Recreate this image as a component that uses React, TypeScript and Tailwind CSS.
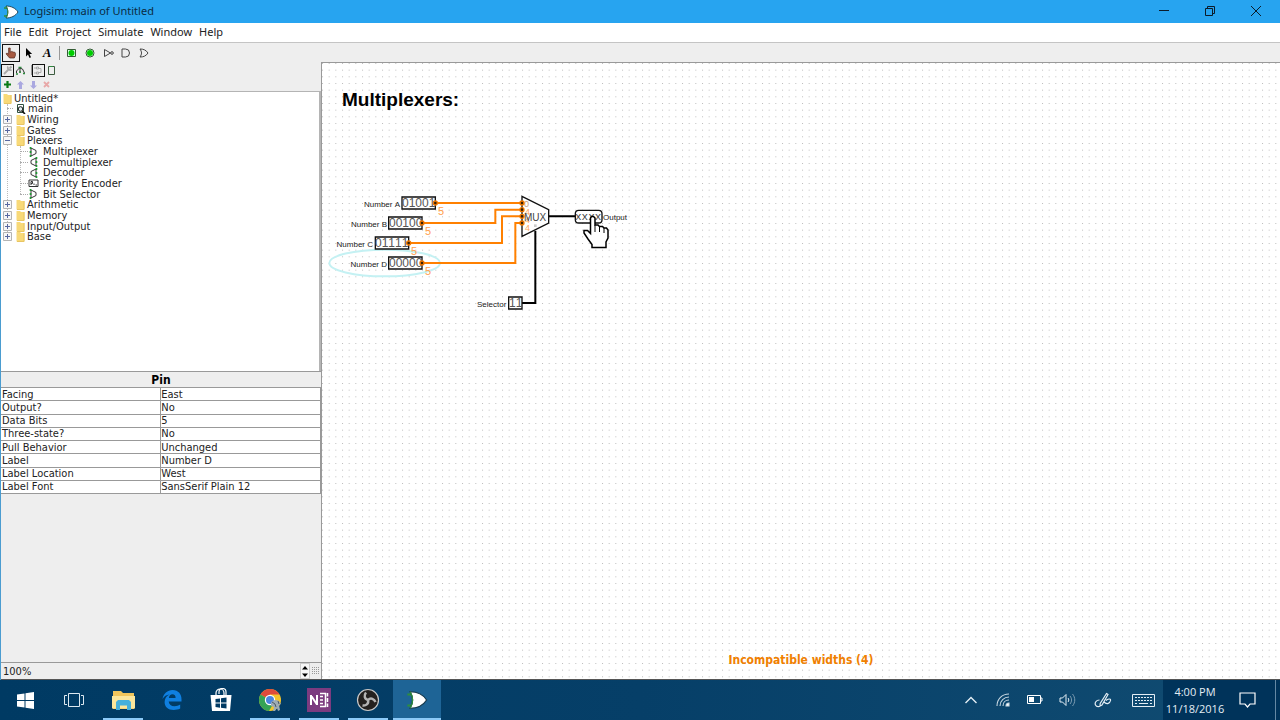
import type { ReactNode } from 'react';
import clsx from 'clsx';

const menus = ['File', 'Edit', 'Project', 'Simulate', 'Window', 'Help'];

type Glyph = 'circuit' | 'folder' | 'mux' | 'demux' | 'encoder';

const tree: { label: string; depth: number; icon: Glyph; open?: boolean }[] = [
    { label: 'Untitled*', depth: 0, icon: 'folder' },
    { label: 'main', depth: 1, icon: 'circuit' },
    { label: 'Wiring', depth: 1, icon: 'folder', open: false },
    { label: 'Gates', depth: 1, icon: 'folder', open: false },
    { label: 'Plexers', depth: 1, icon: 'folder', open: true },
    { label: 'Multiplexer', depth: 2, icon: 'mux' },
    { label: 'Demultiplexer', depth: 2, icon: 'demux' },
    { label: 'Decoder', depth: 2, icon: 'demux' },
    { label: 'Priority Encoder', depth: 2, icon: 'encoder' },
    { label: 'Bit Selector', depth: 2, icon: 'mux' },
    { label: 'Arithmetic', depth: 1, icon: 'folder', open: false },
    { label: 'Memory', depth: 1, icon: 'folder', open: false },
    { label: 'Input/Output', depth: 1, icon: 'folder', open: false },
    { label: 'Base', depth: 1, icon: 'folder', open: false },
];

const attributes = [
    ['Facing', 'East'],
    ['Output?', 'No'],
    ['Data Bits', '5'],
    ['Three-state?', 'No'],
    ['Pull Behavior', 'Unchanged'],
    ['Label', 'Number D'],
    ['Label Location', 'West'],
    ['Label Font', 'SansSerif Plain 12'],
];

const LogisimMark = ({ className }: { className?: string }) => (
    <svg viewBox="0 0 16 16" className={className} fill="none">
        <path d="M1 4h3M1 12h3" stroke="#2f8f3a" strokeWidth="1.4" />
        <path d="M3 2C8 2 12.500 4 15 8C12.500 12 8 14 3 14C5.400 10 5.400 6 3 2Z" fill="#fff" stroke="#16384a" strokeWidth="0.9" />
        <path d="M3 2C5.4 6 5.4 10 3 14" stroke="#2f8f3a" strokeWidth="0.9" />
    </svg>
);

const TitleBar = () => (
    <header className="flex h-[23px] shrink-0 items-center bg-[#27a4f0] pr-px pl-[3px]">
        <LogisimMark className="h-4 w-4" />
        <h1 className="ml-[5px] flex-1 font-['Noto_Sans','Open_Sans',sans-serif] text-[11px] text-[#0c2c44]">Logisim: main of Untitled</h1>
        <button aria-label="Minimize" className="flex h-full w-[46px] items-center justify-center">
            <svg width="12" height="12" stroke="#0b1c2b"><path d="M1 4.500h10" /></svg>
        </button>
        <button aria-label="Restore" className="flex h-full w-[46px] items-center justify-center">
            <svg width="12" height="12" fill="none" stroke="#0b1c2b"><path d="M1.500 2.500h7v7h-7zM3.500 2.500v-2h7v7h-2" /></svg>
        </button>
        <button aria-label="Close" className="flex h-full w-[46px] items-center justify-center">
            <svg width="12" height="12" stroke="#0b1c2b"><path d="M1 0l10 10M11 0L1 10" /></svg>
        </button>
    </header>
);

const MenuBar = () => (
    <nav className="flex h-5 shrink-0 items-center gap-[7px] border-b border-[#c4c4c4] bg-white pl-[3px] font-['Noto_Sans','Open_Sans',sans-serif] text-[11px] text-[#222]">
        {menus.map((menu) => (
            <button key={menu}>{menu}</button>
        ))}
    </nav>
);

const Tool = ({ label, active, small, children }: { label: string; active?: boolean; small?: boolean; children: ReactNode }) => (
    <button
        aria-label={label}
        className={clsx(
            'flex shrink-0 items-center justify-center',
            small ? 'h-[13px] w-[13px]' : 'h-[18px] w-[18px]',
            active && 'border border-[#111]',
        )}
    >
        {children}
    </button>
);

const ToolBar = () => (
    <div className="flex h-[19px] shrink-0 items-center bg-[#eee] pl-px">
        <Tool label="Poke" active>
            <svg width="12" height="12" viewBox="0 0 12 12">
                <path d="M3.6 1h1.6v4.2l1-.8.9.5.8-.3.8.7 1.1-.1.6 1v2.4L9.3 11H4.6L1 6.8 2 6l1.6 1.2Z" fill="#a65a42" stroke="#54281c" strokeWidth="0.7" />
            </svg>
        </Tool>
        <Tool label="Edit">
            <svg width="10" height="12" viewBox="0 0 10 12"><path d="M2 1v8.4l2-1.8 1.5 3.4 1.5-.7L5.500 7h2.6Z" fill="#000" /></svg>
        </Tool>
        <Tool label="Text">
            <span className="font-['Liberation_Serif',serif] text-[13px] leading-none font-bold text-black italic">A</span>
        </Tool>
        <span className="mx-[3px] h-[14px] w-px bg-[#999]" />
        <Tool label="Input pin">
            <svg width="10" height="10"><path d="M.5 1.500h8v7h-8z" fill="#dfe" stroke="#345c34" /><circle cx="4.500" cy="5" r="3" fill="#0c0" /></svg>
        </Tool>
        <Tool label="Output pin">
            <svg width="10" height="10"><circle cx="5" cy="5" r="4" fill="#dfe" stroke="#345c34" /><circle cx="5" cy="5" r="3" fill="#0c0" /></svg>
        </Tool>
        <Tool label="NOT gate">
            <svg width="11" height="10" fill="none" stroke="#444"><path d="M1.500 1.500v7l6-3.500Z" /><circle cx="9" cy="5" r="1.300" /></svg>
        </Tool>
        <Tool label="AND gate">
            <svg width="10" height="10" fill="none" stroke="#444"><path d="M1 1h3.500a4 4 0 010 8H1Z" /></svg>
        </Tool>
        <Tool label="OR gate">
            <svg width="10" height="10" fill="none" stroke="#444"><path d="M1 1c3.500 0 6 1 8 4-2 3-4.500 4-8 4 2-3 2-5 0-8Z" /></svg>
        </Tool>
    </div>
);

const ExplorerBars = () => (
    <>
        <div className="flex h-4 items-center">
            <Tool label="Show projects" small active>
                <svg width="10" height="10" fill="none" stroke="#aaa" strokeWidth="1.800"><path d="M1 9l4-4M8.500 1.500l-2 2M5 1.500c-1 2 .500 4 3.500 3.500" /></svg>
            </Tool>
            <Tool label="Show simulation" small>
                <svg width="11" height="11" fill="none"><path d="M1.500 8V6l3-3 3 1 2 4M5 3v5" stroke="#333" /><path d="M1 9h2M4 7h2M8 8.500h2M3.500 2.500h3" stroke="#2c8a3c" strokeWidth="1.600" /></svg>
            </Tool>
            <span className="ml-1 h-[10px] w-px bg-[#999]" />
            <Tool label="Edit layout" small active>
                <svg width="9" height="9" fill="none" stroke="#aaa"><path d="M0 2h2M0 7h2M2.500 1h2v2h-2ZM2.500 6h2v2h-2ZM5 2.500h2v4H5" /></svg>
            </Tool>
            <Tool label="Edit appearance" small>
                <svg width="9" height="11" fill="none"><path d="M1.500 1.500h6v8h-6Z" stroke="#3c5c40" /><path d="M3 1.500h3" stroke="#2c8a3c" /></svg>
            </Tool>
        </div>
        <div className="flex h-[13px] items-center">
            <Tool label="Add circuit" small>
                <svg width="9" height="9" stroke="#0a7a14" strokeWidth="2.200"><path d="M4.500 1v7M1 4.500h7" /></svg>
            </Tool>
            <Tool label="Move up" small>
                <svg width="7" height="8" fill="#aaa8e0"><path d="M3.500 0L7 3.500H5V8H2V3.500H0Z" /></svg>
            </Tool>
            <Tool label="Move down" small>
                <svg width="7" height="8" fill="#aaa8e0"><path d="M3.500 8L0 4.500H2V0H5V4.500H7Z" /></svg>
            </Tool>
            <Tool label="Remove circuit" small>
                <svg width="7" height="7" stroke="#e8a8a8" strokeWidth="1.800"><path d="M1 1l5 5M6 1L1 6" /></svg>
            </Tool>
        </div>
    </>
);

const TreeIcon = ({ icon }: { icon: Glyph }) => {
    if (icon === 'folder') {
        return (
            <svg width="9" height="11" viewBox="0 0 9 11" className="shrink-0">
                <path d="M.5 1h3.500l1 1h3.500v8.500H.5Z" fill="#f8d978" />
                <path d="M1 10.500H8V2" fill="none" stroke="#e8c564" />
            </svg>
        );
    }
    return (
        <svg width="11" height="10" viewBox="0 0 11 10" className="shrink-0" fill="none" stroke="#333">
            {icon === 'circuit' && (
                <>
                    <path d="M2.500.5h6v8h-6Z" stroke="#2f5140" />
                    <circle cx="5.500" cy="5" r="2.300" fill="#dfeef0" stroke="#111" />
                    <path d="M7 7l3 3" stroke="#111" strokeWidth="1.600" />
                </>
            )}
            {icon === 'mux' && (
                <>
                    <path d="M3 1l5 2.500v3L3 9Z" />
                    <path d="M2.500 0v2M2.500 4v2M2.500 8v2" stroke="#1c9c30" strokeWidth="1.600" />
                </>
            )}
            {icon === 'demux' && (
                <>
                    <path d="M8 1L3 3.500v3L8 9Z" />
                    <path d="M8.500 0v2M8.500 4v2M8.500 8v2" stroke="#1c9c30" strokeWidth="1.600" />
                </>
            )}
            {icon === 'encoder' && <path d="M1 2h9v6.500H1ZM3 7V3.500h1.500v2H3M6 7V5.500M7.500 7h1.500" />}
        </svg>
    );
};

const Explorer = () => (
    <div className="min-h-0 flex-1 border-t border-r-2 border-[#b4b4b4] bg-white pt-px">
        <ul className="relative grid h-[149px] auto-rows-fr text-[11px] leading-none text-[#222]">
            <span className="absolute top-[11px] left-[6px] h-[132px] border-l border-dotted border-[#bbb]" />
            <span className="absolute top-[53px] left-[19px] h-[48px] border-l border-dotted border-[#bbb]" />
            {tree.map((node) => (
                <li
                    key={node.label}
                    className={clsx(
                        'relative flex min-h-0 items-center',
                        node.depth < 2 && 'gap-[2px] pl-[2px]',
                        node.depth === 2 && 'gap-1 pl-[19px]',
                    )}
                >
                    {node.depth === 1 && node.open !== undefined && (
                        <button aria-label={`Toggle ${node.label}`} className="mr-[2px] shrink-0">
                            <svg width="9" height="9" className="block" fill="none">
                                <path d="M.5.5h8v8h-8Z" fill="#f7f7f7" stroke="#b4b4b4" />
                                <path d={node.open ? 'M2 4.500h5' : 'M2 4.500h5M4.500 2v5'} stroke="#5868a0" />
                            </svg>
                        </button>
                    )}
                    {node.depth === 1 && node.open === undefined && <span className="ml-1 w-[6px] border-t border-dotted border-[#aaa]" />}
                    {node.depth === 2 && <span className="-mr-1 w-[8px] border-t border-dotted border-[#aaa]" />}
                    <TreeIcon icon={node.icon} />
                    <span>{node.label}</span>
                </li>
            ))}
        </ul>
    </div>
);

const AttributeTable = () => (
    <section className="flex h-[291px] shrink-0 flex-col border-t border-[#999] bg-[#eee]">
        <h2 className="h-[15px] text-center text-[12px] leading-4 font-bold text-black">Pin</h2>
        <table className="h-[107px] w-full table-fixed border-collapse bg-white text-[11px] leading-none text-[#222]">
            <tbody>
                {attributes.map(([name, value]) => (
                    <tr key={name}>
                        <th scope="row" className="border border-l-0 border-[#999] p-0 pl-px text-left font-normal">{name}</th>
                        <td className="border border-[#999] p-0">{value}</td>
                    </tr>
                ))}
            </tbody>
        </table>
    </section>
);

const ZoomBar = () => (
    <div className="flex h-[17px] shrink-0 items-center border-t border-[#999] bg-[#eee] text-[11px] text-[#222]">
        <input aria-label="Zoom" defaultValue="100%" className="h-full min-w-0 flex-1 pl-[2px] outline-none" />
        <div className="flex h-full w-[10px] flex-col border border-[#ccc] bg-[#f6f6f6]">
            <button aria-label="Zoom in" className="flex flex-1 items-center justify-center">
                <svg width="6" height="4"><path d="M3 0l3 3.500H0Z" /></svg>
            </button>
            <button aria-label="Zoom out" className="flex flex-1 items-center justify-center">
                <svg width="6" height="4"><path d="M3 4L0 .5h6Z" /></svg>
            </button>
        </div>
        <button aria-label="Toggle grid" className="flex w-[11px] justify-center">
            <svg width="8" height="8" stroke="#999" strokeDasharray="1 1"><path d="M0 .5h8M0 2.500h8M0 4.500h8M0 6.500h8" /></svg>
        </button>
    </div>
);

// Pin values and labels, in screen pixels; the wiring below is in circuit units.
const pins = [
    { name: 'Number A', bits: '01001', x: 80, y: 140 },
    { name: 'Number B', bits: '00100', x: 67, y: 160 },
    { name: 'Number C', bits: '01111', x: 53, y: 180 },
    { name: 'Number D', bits: '00000', x: 67, y: 200 },
];

const Canvas = () => (
    <main className="relative min-w-0 flex-1 overflow-hidden border-t border-l border-[#999] bg-white">
        <svg className="absolute inset-0 h-full w-full font-['Liberation_Sans',Arial,sans-serif] [font-kerning:none]">
            <defs>
                <pattern id="grid" width="10" height="10" patternUnits="userSpaceOnUse" patternTransform="scale(0.66667)">
                    <path d="M0 0h1.500v1.500H0Z" fill="#bcbcbc" />
                </pattern>
            </defs>
            <rect width="100%" height="100%" fill="url(#grid)" />

            <g transform="scale(0.66667)" fill="none">
                <ellipse cx="94" cy="300" rx="83" ry="20" stroke="#c4f1f3" strokeWidth="3" />
                <g stroke="#ff8000" strokeWidth="3">
                    <path d="M170 210H300M150 240H260V220H300M130 270H270V230H300M150 300H290V240H300" />
                </g>
                <g stroke="#000" strokeWidth="3">
                    <path d="M340 230H380M300 360H320V252" />
                </g>
                <g stroke="#111" strokeWidth="2">
                    <path d="M120 201h50v18h-50ZM100 231h50v18h-50ZM80 261h50v18H80ZM100 291h50v18h-50ZM280 351h20v18h-20Z" fill="#fff" />
                    <path d="M300 200L340 220V240L300 260Z" fill="#fff" />
                    <rect x="380" y="221" width="40" height="19" rx="5" fill="#fff" />
                </g>
                <path d="M318 242h4v4h-4Z" fill="#ccc" />
            </g>

            {pins.map((pin) => (
                <g key={pin.name}>
                    <text x={pin.x - 2} y={pin.y + 4} fontSize="8" textAnchor="end" fill="#222">{pin.name}</text>
                    <text x={pin.x} y={pin.y + 4} fontSize="12" fill="#555">{pin.bits}</text>
                    <text x={pin.x + 36} y={pin.y + 12} fontSize="11" fill="#ffa04c">5</text>
                </g>
            ))}
            <text x="155" y="244" fontSize="8" fill="#222">Selector</text>
            <text x="187" y="244" fontSize="12" fill="#555">11</text>
            <g fontSize="9" fill="#ffa860">
                <text x="202" y="144" fill="#c8a080">0</text>
                <text x="203" y="152">4</text>
                <text x="203" y="160">4</text>
                <text x="203" y="168">4</text>
            </g>
            <text x="213" y="158" fontSize="10" textAnchor="middle" fill="#444">MUX</text>
            <text x="253" y="157" fontSize="11" fill="#444" className="font-['Liberation_Mono',monospace]">xxxx</text>
            <text x="281" y="157" fontSize="8" fill="#222">Output</text>

            <g transform="scale(0.66667)" fill="#3c2000" stroke="#f07800" strokeWidth="2">
                <circle cx="170" cy="210" r="3" />
                <circle cx="150" cy="240" r="3" />
                <circle cx="130" cy="270" r="3" />
                <circle cx="150" cy="300" r="3" />
                <circle cx="300" cy="210" r="3" />
                <circle cx="300" cy="220" r="3" />
                <circle cx="300" cy="230" r="3" />
                <circle cx="300" cy="240" r="3" />
            </g>

            <text x="20" y="43" fontSize="19" fontWeight="bold">Multiplexers:</text>

            {/* Poke cursor */}
            <path
                d="M268.500 155l1-1.500h2l1.500 1.500v7h3l1.500 1.500h3l1.500 1.500h2.500l1.500 2v8l-2 4v5.500h-14v-3l-4-5.500-4-6v-2.500h3.500l3 3Z"
                fill="#fff"
                stroke="#000"
                strokeWidth="1.500"
            />
            <path d="M273 162v7M277.500 163v6M282 165v5" stroke="#000" />
        </svg>
        <p className="absolute bottom-[11px] left-1/2 -translate-x-1/2 text-[12px] leading-4 font-bold whitespace-nowrap text-[#f08000]">
            Incompatible widths (4)
        </p>
    </main>
);

const TaskButton = ({ label, running, active, children }: { label: string; running?: boolean; active?: boolean; children: ReactNode }) => (
    <button aria-label={label} className={clsx('relative flex h-full w-12 items-center justify-center', active && 'bg-[#1e6496]')}>
        {children}
        {(running || active) && <span className={clsx('absolute bottom-0 h-[2px] bg-[#8ccaf8]', active ? 'inset-x-0' : 'inset-x-1')} />}
    </button>
);

const TaskBar = () => (
    <footer className="flex h-10 shrink-0 items-center justify-between bg-linear-to-r from-[#003a63] via-[#063f68] to-[#114c72] text-[#e4eef5]">
        <div className="flex h-full gap-px pl-px">
            <TaskButton label="Start">
                <svg width="17" height="17" viewBox="0 0 17 17" fill="#fff"><path d="M0 2.500l7.500-1v6.500H0ZM8.500 1.300L17 0v8H8.500ZM0 9h7.500v6.500L0 14.500ZM8.500 9H17v8l-8.500-1.300Z" /></svg>
            </TaskButton>
            <TaskButton label="Task View">
                <svg width="21" height="15" fill="none" stroke="#dce8f0"><path d="M4.500.5h11v13h-11ZM3 2.500H.5v9H3M17 2.500h2.500v9H17" /></svg>
            </TaskButton>
            <TaskButton label="File Explorer" running>
                <svg width="23" height="20" viewBox="0 0 23 20">
                    <path d="M1 1h8l2 2h11v16H1Z" fill="#f0c55c" />
                    <path d="M0 6h23v12.500H0Z" fill="#fbe69c" />
                    <path d="M4 20V12l2-2h11l2 2v8h-4v-4.500H8V20Z" fill="#45b0dc" />
                </svg>
            </TaskButton>
            <TaskButton label="Edge">
                <svg width="20" height="20" viewBox="0 0 20 20" fill="#0f7fe0">
                    <path d="M.5 9C1.500 3.500 5.500 0 10.500 0 16.500 0 19.500 4.300 19.500 9.500v2H6.700c.3 3 2.500 4.700 5.800 4.700 2.200 0 4-.6 5.700-1.600v4c-1.900 1-4.200 1.400-6.500 1.400C6 20 2.600 16.800 2.600 12c0-3.300 1.800-6 4.900-7.500C4.500 4.800 2 6.300.5 9ZM6.900 8h6.700c0-2.400-1-3.700-3.100-3.700S7.300 5.600 6.900 8Z" />
                </svg>
            </TaskButton>
            <TaskButton label="Store">
                <svg width="22" height="24" viewBox="0 0 22 24">
                    <path d="M6 8V5a4 4 0 018 0v3M9 6V4a3.500 3.500 0 017 0v3" fill="none" stroke="#fff" strokeWidth="1.200" />
                    <path d="M.5 7h21l-1.500 16H2Z" fill="#fff" />
                    <path d="M5.500 11l4.500-.6v4.200H5.500ZM11 10.200l5.500-.7v5.100H11ZM5.500 15.500H10v4.200l-4.500-.6ZM11 15.500h5.500v5L11 19.800Z" fill="#003a63" />
                </svg>
            </TaskButton>
            <TaskButton label="Chrome" running>
                <svg width="24" height="24" viewBox="0 0 24 24">
                    <circle cx="12" cy="12" r="11" fill="#f2c42c" />
                    <path d="M12 12L2.500 6.500A11 11 0 0121.500 6.500H12Z" fill="#dd4b3c" />
                    <path d="M12 12l-9.500-5.500A11 11 0 0011 23l5-8.500Z" fill="#35a355" />
                    <circle cx="12" cy="12" r="5.200" fill="#fff" />
                    <circle cx="12" cy="12" r="4" fill="#4a86e0" />
                    <path d="M13 15c1-3 5-4 8-2l2 3-2 1 1 5-2 1-1-3-2 3h-2l1-4-3-1Z" fill="#9eacb4" />
                    <path d="M14 14l3 2 1 3M20 13l1 3" fill="none" stroke="#4c5a66" />
                </svg>
            </TaskButton>
            <TaskButton label="OneNote" running>
                <svg width="24" height="24" viewBox="0 0 24 24">
                    <path d="M0 0h24v24H0Z" fill="#7c3b80" />
                    <path d="M4 17V7M10 7v10M4 7.500l6 9" fill="none" stroke="#fff" strokeWidth="2" />
                    <path d="M13 5.500h5.500v13H13M13 8.500h3M13 12h3M13 15.500h3M20.500 5v3.500M20.500 10v4M20.500 15.500V19" fill="none" stroke="#fff" strokeWidth="1.500" />
                </svg>
            </TaskButton>
            <TaskButton label="OBS" running>
                <svg width="24" height="24" viewBox="0 0 24 24">
                    <circle cx="12" cy="12" r="10.500" fill="#24211f" stroke="#c8c8c8" strokeWidth="1.200" />
                    <g fill="none" stroke="#b4b4b4" strokeWidth="2.400">
                        <path d="M12 12c-4-1-4-5-2-7.500" />
                        <path d="M12 12c-4-1-4-5-2-7.500" transform="rotate(120 12 12)" />
                        <path d="M12 12c-4-1-4-5-2-7.500" transform="rotate(240 12 12)" />
                    </g>
                </svg>
            </TaskButton>
            <TaskButton label="Logisim" active>
                <LogisimMark className="h-[22px] w-[22px]" />
            </TaskButton>
        </div>

        <div className="flex h-full items-center">
            <button aria-label="Show hidden icons" className="flex w-8 justify-center">
                <svg width="12" height="8" fill="none" stroke="#e4eef5" strokeWidth="1.400"><path d="M.5 7L6 1.500 11.500 7" /></svg>
            </button>
            <button aria-label="Network" className="flex w-8 justify-center">
                <svg width="14" height="14" viewBox="0 0 14 14" fill="none" stroke="#c8d8e2" strokeWidth="1.100">
                    <path d="M1 13C1 6 6 1 13 1M4 13C4 8 8 4 13 4M7 13C7 9.500 9.500 7 13 7" />
                    <path d="M10 13a3 3 0 013-3v3Z" fill="#fff" />
                </svg>
            </button>
            <button aria-label="Battery" className="flex w-8 justify-center">
                <svg width="16" height="10" fill="none" stroke="#fff"><path d="M.5.500h13v8H.5ZM14 3h1v3h-1" /><path d="M2 2h5v5H2Z" fill="#fff" stroke="none" /></svg>
            </button>
            <button aria-label="Volume" className="flex w-8 justify-center">
                <svg width="17" height="14" viewBox="0 0 17 14" fill="none" stroke="#e4eef5">
                    <path d="M1 5h2.500L7 1.500v11L3.500 9H1Z" />
                    <path d="M9 5c1 1 1 3 0 4" />
                    <path d="M11 3c2 2.300 2 5.700 0 8M13.500 1c3 3.500 3 8.500 0 12" stroke="#7c9cb2" />
                </svg>
            </button>
            <button aria-label="Windows Ink" className="flex w-10 justify-center">
                <svg width="18" height="17" viewBox="0 0 18 17" fill="none" stroke="#e4eef5" strokeWidth="1.200">
                    <path d="M12.500 1.500l1.500 1-6 10.500-2 1 .200-2.500ZM5.500 8C2 8 .5 11 1.500 13s4 2.500 5.500 0M10 10c3 3 6 1 6.500-1.500S13.500 7 12 8.500" />
                </svg>
            </button>
            <button aria-label="Touch keyboard" className="flex w-10 justify-center">
                <svg width="23" height="13" fill="none" stroke="#e4eef5">
                    <path d="M.5.5h22v12H.5Z" />
                    <path d="M3 3.500h17M3 6.500h17" strokeDasharray="2 1" />
                    <path d="M3 9.500h2M7 9.500h9M18 9.500h2" />
                </svg>
            </button>
            <button className="flex h-full w-16 flex-col items-center justify-center bg-[#00335a] font-['Open_Sans','Noto_Sans',sans-serif] text-[11px] leading-[17px]">
                <span>4:00 PM</span>
                <span>11/18/2016</span>
            </button>
            <div className="flex h-full bg-[#00335a] pr-2">
                <button aria-label="Action center" className="flex w-10 items-center justify-center">
                    <svg width="17" height="16" fill="none" stroke="#fff" strokeWidth="1.200"><path d="M1 1h15v11h-5l-2.500 3L6 12H1Z" /></svg>
                </button>
            </div>
            <button aria-label="Show desktop" className="h-full w-[5px] border-l border-[#6488a4] bg-[#00335a]" />
        </div>
    </footer>
);

const App = () => (
    <div className="flex h-screen flex-col overflow-hidden bg-[#eee] font-['DejaVu_Sans_Condensed','DejaVu_Sans',Tahoma,sans-serif]">
        <TitleBar />
        <div className="flex min-h-0 flex-1 flex-col border-l border-[#4a9cd0]">
            <MenuBar />
            <ToolBar />
            <div className="flex min-h-0 flex-1 border-b border-[#555]">
                <aside className="flex w-80 shrink-0 flex-col">
                    <ExplorerBars />
                    <Explorer />
                    <AttributeTable />
                    <ZoomBar />
                </aside>
                <Canvas />
            </div>
        </div>
        <TaskBar />
    </div>
);

export default App;
